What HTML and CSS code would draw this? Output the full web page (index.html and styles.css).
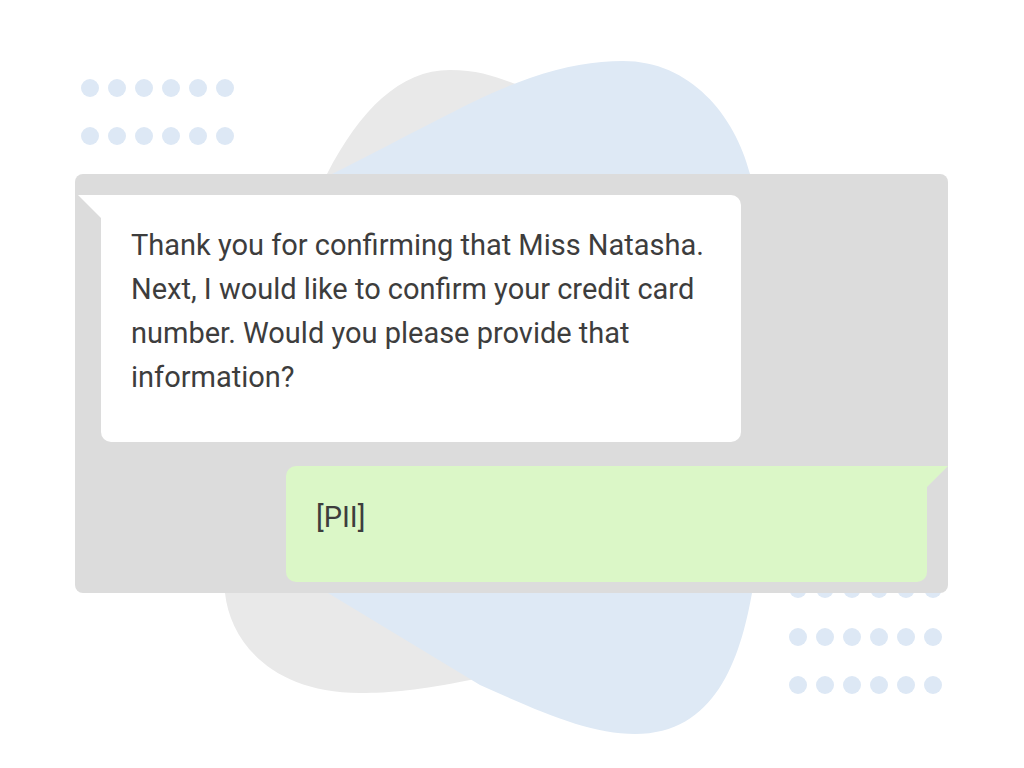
FILE: index.html
```html
<!DOCTYPE html>
<html lang="en">

<head>
    <meta charset="UTF-8">
    <meta name="viewport" content="width=device-width, initial-scale=1.0">
    <title>Chat Redaction</title>
    <link rel="stylesheet" href="styles.css">
</head>

<body>
    <div class="scene">
        <!-- Background decoration -->
        <svg class="blobs" width="1024" height="768" viewBox="0 0 1024 768">
            <path class="blob-gray"
                d="M327 174 C360 110 400 70 450 70 C480 70 500 78 520 86 L640 300 L600 640 C550 660 500 675 470 680 C420 690 390 693 360 693 C270 693 230 640 225 593 L240 400 Z" />
            <path class="blob-blue"
                d="M332 174 C420 130 480 95 530 78 C565 66 595 61 623 61 C690 61 735 115 750 174 C765 260 765 500 752 593 C740 660 715 734 635 734 C590 734 540 712 480 685 L328 593 L150 380 Z" />
        </svg>

        <div class="dots dots-top">
            <span></span><span></span><span></span><span></span><span></span><span></span>
            <span></span><span></span><span></span><span></span><span></span><span></span>
        </div>

        <div class="dots dots-bottom">
            <span></span><span></span><span></span><span></span><span></span><span></span>
            <span></span><span></span><span></span><span></span><span></span><span></span>
            <span></span><span></span><span></span><span></span><span></span><span></span>
        </div>

        <!-- Chat window -->
        <div class="chat">
            <div class="bubble bubble-in">
                Thank you for confirming that Miss Natasha. Next, I would like to confirm your credit card number.
                Would you please provide that information?
            </div>
            <div class="bubble bubble-out">[PII]</div>
        </div>
    </div>
</body>

</html>
```

FILE: styles.css
```css
body {
    margin: 0;
    padding: 0;
    background: #fff;
    font-family: 'Roboto', 'Liberation Sans', sans-serif;
    color: #3d3d3d;
}

.scene {
    position: relative;
    width: 1024px;
    height: 768px;
    overflow: hidden;
    padding-top: 174px;
    box-sizing: border-box;
}

.blobs {
    position: absolute;
    top: 0;
    left: 0;
}

.blob-gray {
    fill: #e9e9e9;
}

.blob-blue {
    fill: #dee9f5;
}

.dots {
    position: absolute;
    display: grid;
    grid-template-columns: repeat(6, 18px);
    column-gap: 9px;
    row-gap: 30px;
}

.dots span {
    width: 18px;
    height: 18px;
    border-radius: 50%;
    background: #dde8f5;
}

.dots-top {
    left: 81px;
    top: 79px;
}

.dots-bottom {
    left: 789px;
    top: 580px;
}

.chat {
    position: relative;
    margin-left: 75px;
    width: 873px;
    height: 419px;
    box-sizing: border-box;
    padding: 21px 21px 0 26px;
    background: #dcdcdc;
    border-radius: 8px;
    display: flex;
    flex-direction: column;
    gap: 24px;
}

.bubble {
    position: relative;
    font-size: 29px;
    line-height: 44px;
    padding: 28px 30px;
    box-sizing: border-box;
    border-radius: 10px;
}

.bubble::before {
    content: '';
    position: absolute;
    top: 0;
}

.bubble-in {
    width: 640px;
    height: 247px;
    background: #fff;
    border-top-left-radius: 0;
}

.bubble-in::before {
    left: -23px;
    width: 23px;
    height: 23px;
    background: #fff;
    clip-path: polygon(0 0, 100% 0, 100% 100%);
}

.bubble-out {
    align-self: flex-end;
    width: 641px;
    height: 116px;
    padding-top: 29px;
    background: #dbf7c7;
    border-top-right-radius: 0;
}

.bubble-out::before {
    right: -21px;
    width: 21px;
    height: 21px;
    background: #dbf7c7;
    clip-path: polygon(0 0, 100% 0, 0 100%);
}
```
